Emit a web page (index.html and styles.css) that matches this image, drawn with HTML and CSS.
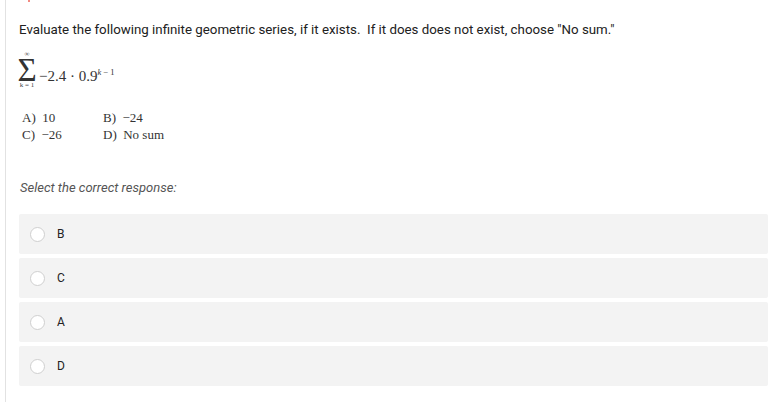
FILE: index.html
```html
<!DOCTYPE html>
<html lang="en">
<head>
    <meta charset="UTF-8">
    <meta name="viewport" content="width=device-width, initial-scale=1.0">
    <title>Question</title>
    <link rel="stylesheet" href="styles.css">
</head>
<body>

<div class="question">
    <span class="required-mark"></span>

    <p class="prompt">Evaluate the following infinite geometric series, if it exists.&nbsp; If it does does not exist, choose "No sum."</p>

    <!-- series -->
    <div class="series">
        <div class="sigma">
            <span class="limit">&infin;</span>
            <span class="sigma-sign">&Sigma;</span>
            <span class="limit">k = 1</span>
        </div>
        <div class="term">&minus;2.4 &middot; 0.9<sup><i>k</i> &minus; 1</sup></div>
    </div>

    <!-- printed choices -->
    <div class="choices">
        <span>A)&nbsp; 10</span>
        <span>B)&nbsp; &minus;24</span>
        <span>C)&nbsp; &minus;26</span>
        <span>D)&nbsp; No sum</span>
    </div>

    <p class="instruction">Select the correct response:</p>

    <div class="options">
        <label class="option"><span class="radio"></span>B</label>
        <label class="option"><span class="radio"></span>C</label>
        <label class="option"><span class="radio"></span>A</label>
        <label class="option"><span class="radio"></span>D</label>
    </div>
</div>

</body>
</html>
```

FILE: styles.css
```css
body {
    margin: 0;
    font-family: Roboto, "Liberation Sans", Arial, sans-serif;
    background-color: white;
    color: #212121;
}

.question {
    position: relative;
    margin-left: 5px;
    border-left: 1px solid #e2e2e2;
    min-height: 402px;
    padding: 20px 0 0 13px;
    box-sizing: border-box;
}

.required-mark {
    position: absolute;
    top: 0;
    left: 22px;
    width: 2px;
    height: 2px;
    background-color: #f28b82;
}

.prompt {
    margin: 0;
    font-size: 13.3px;
    line-height: 20px;
    font-weight: 400;
}

.series {
    display: flex;
    align-items: flex-start;
    margin-top: 11px;
    margin-left: 0;
    font-family: "Liberation Serif", "Times New Roman", serif;
    color: #333;
}

.sigma {
    display: flex;
    flex-direction: column;
    align-items: center;
    width: 16px;
    white-space: nowrap;
}

.limit {
    font-size: 7px;
    line-height: 7px;
    color: #444;
}

.sigma-sign {
    font-size: 33px;
    line-height: 22px;
    margin: 1px 0 1px;
}

.term {
    font-size: 15px;
    line-height: 16px;
    margin: 13px 0 0 4px;
    white-space: nowrap;
}

.term sup {
    font-size: 8.5px;
    vertical-align: 6px;
}

.choices {
    display: grid;
    grid-template-columns: 81px auto;
    width: 180px;
    margin: 20px 0 0 3px;
    font-family: "Liberation Serif", "Times New Roman", serif;
    font-size: 13px;
    line-height: 17px;
    color: #333;
}

.instruction {
    margin: 36px 0 0 1px;
    font-size: 13px;
    font-style: italic;
    line-height: 18px;
    color: #555;
}

.options {
    display: flex;
    flex-direction: column;
    gap: 4px;
    margin-top: 17px;
}

.option {
    display: flex;
    align-items: center;
    height: 40px;
    padding-left: 11px;
    background-color: #f3f3f3;
    border-radius: 2px;
    font-size: 12px;
    color: #222;
}

.radio {
    width: 13px;
    height: 13px;
    border: 1px solid #cfcfcf;
    border-radius: 50%;
    background-color: white;
    margin-right: 12px;
}
```
